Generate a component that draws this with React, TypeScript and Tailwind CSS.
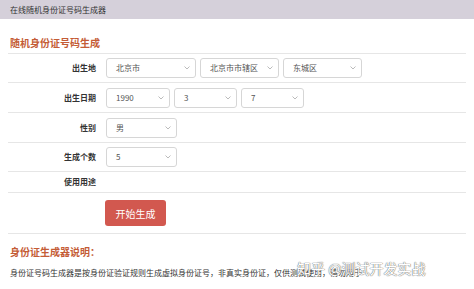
import React from 'react'

const font = { fontFamily: '"Noto Sans CJK SC", "Noto Sans", sans-serif' }

function Chevron() {
  return (
    <svg width="6" height="4" viewBox="0 0 6 4" className="shrink-0">
      <path d="M0.5 0.5 L3 3 L5.5 0.5" fill="none" stroke="#aaa" strokeWidth="0.8" />
    </svg>
  )
}

function FakeSelect({ value, width }: { value: string; width: string }) {
  return (
    <div
      className={`${width} h-[20px] flex items-center justify-between border border-[#d6d6d6] rounded-[3px] bg-white pl-[9px] pr-[5px] text-[8px] text-[#555]`}
    >
      <span>{value}</span>
      <Chevron />
    </div>
  )
}

function Row({ label, children, h }: { label: string; children?: React.ReactNode; h: string }) {
  return (
    <div className={`${h} flex items-center border-b border-[#e6e6e6]`}>
      <div className="w-[88px] text-right text-[8px] font-bold text-[#333]">{label}</div>
      <div className="flex gap-[4px] ml-[10px]">{children}</div>
    </div>
  )
}

export default function App() {
  return (
    <div className="relative w-[474px] h-[289px] bg-white overflow-hidden" style={font}>
      <div className="h-[19px] bg-[#d5d0da] flex items-center px-[10px] text-[8px] text-[#333]">
        在线随机身份证号码生成器
      </div>

      <div className="px-[8px]">
        <div className="h-[35px] flex items-end pb-[3px] border-b border-[#e6e6e6] pl-[2px] text-[10px] font-bold text-[#c45c36]">
          随机身份证号码生成
        </div>

        <Row label="出生地" h="h-[29px]">
          <FakeSelect value="北京市" width="w-[90px]" />
          <FakeSelect value="北京市市辖区" width="w-[79px]" />
          <FakeSelect value="东城区" width="w-[79px]" />
        </Row>
        <Row label="出生日期" h="h-[30px]">
          <FakeSelect value="1990" width="w-[64px]" />
          <FakeSelect value="3" width="w-[63px]" />
          <FakeSelect value="7" width="w-[63px]" />
        </Row>
        <Row label="性别" h="h-[30px]">
          <FakeSelect value="男" width="w-[71px]" />
        </Row>
        <Row label="生成个数" h="h-[29px]">
          <FakeSelect value="5" width="w-[71px]" />
        </Row>
        <Row label="使用用途" h="h-[21px]" />

        <div className="h-[41px] flex items-center border-b border-[#e6e6e6] pl-[97px]">
          <div className="w-[61px] h-[26px] rounded-[3px] bg-[#d2584f] text-white text-[10px] flex items-center justify-center">
            开始生成
          </div>
        </div>

        <div className="pl-[2px] pt-[10px] text-[10px] font-bold text-[#c45c36] leading-[15px]">
          身份证生成器说明：
        </div>
        <div className="pl-[2px] pt-[8px] text-[8px] text-[#333] whitespace-nowrap leading-[12px]">
          身份证号码生成器是按身份证验证规则生成虚拟身份证号，非真实身份证，仅供测试使用，请勿用于
        </div>
      </div>

      <div
        className="absolute left-[297px] top-[258px] text-[14px] text-white whitespace-nowrap leading-[20px]"
        style={{ textShadow: '0 0 1px #666, 0 0 1px #666' }}
      >
        知乎 @测试开发实战
      </div>
    </div>
  )
}
